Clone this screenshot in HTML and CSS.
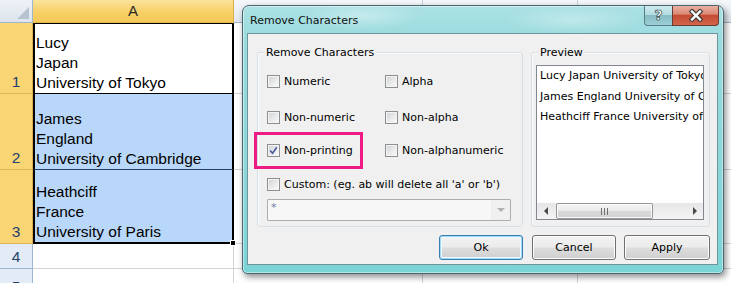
FILE: index.html
```html
<!DOCTYPE html>
<html>
<head>
<meta charset="utf-8">
<title>Remove Characters</title>
<link rel="stylesheet" href="styles.css">
</head>
<body>
<div class="screen">
  <div class="sheet">
    <div class="corner"></div>
    <div class="colhead selcol">A</div>
    <div class="colhead"></div>
    <div class="colhead"></div>
    <div class="colhead"></div>

    <div class="rowhead selrow">1</div>
    <div class="cell a1"><span>Lucy</span><span>Japan</span><span>University of Tokyo</span></div>
    <div class="cell"></div><div class="cell"></div><div class="cell"></div>

    <div class="rowhead selrow">2</div>
    <div class="cell a2"><span>James</span><span>England</span><span>University of Cambridge</span></div>
    <div class="cell"></div><div class="cell"></div><div class="cell"></div>

    <div class="rowhead selrow">3</div>
    <div class="cell a3"><span>Heathciff</span><span>France</span><span>University of Paris</span><i class="fillhandle"></i></div>
    <div class="cell"></div><div class="cell"></div><div class="cell"></div>

    <div class="rowhead">4</div>
    <div class="cell"></div><div class="cell"></div><div class="cell"></div><div class="cell"></div>

    <div class="rowhead">5</div>
    <div class="cell"></div><div class="cell"></div><div class="cell"></div><div class="cell"></div>
  </div>

  <div class="dialog">
    <div class="titlebar">
      <span class="title">Remove Characters</span>
      <div class="capbtns">
        <span class="cbtn help">?</span>
        <span class="cbtn close">
          <svg width="18" height="13" viewBox="0 0 18 13">
            <path d="M5 2.5 L13 10.5 M13 2.5 L5 10.5" stroke="#3a3a3a" stroke-width="4.6" stroke-linecap="square" fill="none"/>
            <path d="M5 2.5 L13 10.5 M13 2.5 L5 10.5" stroke="#ffffff" stroke-width="2.4" stroke-linecap="square" fill="none"/>
          </svg>
        </span>
      </div>
    </div>
    <div class="panel">
      <div class="groups">
        <div class="group main">
          <span class="legend">Remove Characters</span>
          <div class="opts">
            <div class="opt"><span class="cb"></span>Numeric</div>
            <div class="opt"><span class="cb"></span>Alpha</div>
            <div class="opt"><span class="cb"></span>Non-numeric</div>
            <div class="opt"><span class="cb"></span>Non-alpha</div>
            <div class="opt hl"><span class="cb checked"><svg width="9" height="9" viewBox="0 0 9 9"><path d="M1.2 4.6 L3.6 7.2 L7.8 1.2" stroke="#4a5c9a" stroke-width="1.6" fill="none"/></svg></span>Non-printing<i class="hilite"></i></div>
            <div class="opt"><span class="cb"></span>Non-alphanumeric</div>
            <div class="opt wide"><span class="cb"></span>Custom:&nbsp;(eg. ab will delete all 'a' or 'b')</div>
            <div class="combo"><span class="star">*</span><span class="drop"><i class="tri"></i></span></div>
          </div>
        </div>
        <div class="group preview">
          <span class="legend">Preview</span>
          <div class="listbox">
            <div class="lines">
              <div>Lucy Japan University of Tokyo</div>
              <div>James England University of Cambridge</div>
              <div>Heathciff France University of Paris</div>
            </div>
            <div class="hscroll">
              <span class="arr"><i class="tl"></i></span>
              <span class="track"><span class="thumb"><i class="grip"></i></span></span>
              <span class="arr"><i class="tr"></i></span>
            </div>
          </div>
        </div>
      </div>
      <div class="buttons">
        <span class="btn ok">Ok</span>
        <span class="btn cancel">Cancel</span>
        <span class="btn apply">Apply</span>
      </div>
    </div>
  </div>
</div>
</body>
</html>
```

FILE: styles.css
```css
* { box-sizing: border-box; }
html, body { margin: 0; padding: 0; }
body {
  width: 731px;
  height: 283px;
  overflow: hidden;
  background: #ffffff;
  font-family: "Liberation Sans", Arial, sans-serif;
}
.screen {
  position: relative;
  width: 731px;
  height: 283px;
  overflow: hidden;
}

/* ---------- spreadsheet ---------- */
.sheet {
  display: grid;
  grid-template-columns: 33px 201px 189px 155px 160px;
  grid-template-rows: 23px 71px 76px 74px 25px 30px;
}
.corner {
  position: relative;
  background: linear-gradient(#eef2f7, #dde4ec);
  border-right: 1px solid #9eb6ce;
  border-bottom: 1px solid #9eb6ce;
}
.corner::after {
  content: "";
  position: absolute;
  right: 3px;
  bottom: 3px;
  width: 12px;
  height: 12px;
  background: #b7c3d1;
  clip-path: polygon(100% 0, 100% 100%, 0 100%);
}
.colhead {
  background: linear-gradient(#f5f7fa, #e2e8ef);
  border-right: 1px solid #c5d1de;
  border-bottom: 1px solid #9eb6ce;
  font-size: 15px;
  line-height: 22px;
  text-align: center;
  color: #27416b;
}
.colhead.selcol {
  background: linear-gradient(#fbe39b, #f7d066 55%, #f5c95b);
  border-right: 1px solid #d9ad4c;
  border-bottom: 1px solid #e6b54e;
  color: #2b2b2b;
}
.rowhead {
  background: #e3ebf6;
  border-right: 1px solid #9eb6ce;
  border-bottom: 1px solid #9eb6ce;
  font-size: 15.5px;
  line-height: 20px;
  color: #27416b;
  text-align: center;
  display: flex;
  flex-direction: column;
  justify-content: flex-end;
  padding-bottom: 1px;
}
.rowhead.selrow {
  background: #f9d574;
  border-right: 1px solid #dcae4c;
  border-bottom: 1px solid #e0b456;
  color: #22406e;
}
.cell {
  border-right: 1px solid #d4d4d4;
  border-bottom: 1px solid #d4d4d4;
  font-size: 15.5px;
  line-height: 20px;
  color: #000;
  display: flex;
  flex-direction: column;
  justify-content: flex-end;
  padding-left: 1px;
  white-space: nowrap;
}
.cell.a1 {
  background: #fff;
  border: 1px solid #000;
  border-left-width: 2px;
  border-right-width: 2px;
  border-top-width: 1px;
  padding-bottom: 0;
}
.cell.a2 {
  background: #b9d7f9;
  border-left: 2px solid #000;
  border-right: 2px solid #000;
  border-bottom: 1px solid #22406a;
  padding-bottom: 0;
}
.cell.a3 {
  position: relative;
  background: #b9d7f9;
  border-left: 2px solid #000;
  border-right: 2px solid #000;
  border-bottom: 2px solid #000;
  padding-bottom: 0;
}
.fillhandle {
  position: absolute;
  right: -4px;
  bottom: -4px;
  width: 6px;
  height: 6px;
  background: #000;
  border: 1px solid #fff;
}

/* ---------- dialog ---------- */
.dialog {
  position: absolute;
  left: 242px;
  top: 5px;
  width: 482px;
  height: 269px;
  display: flex;
  flex-direction: column;
  padding: 0 5px 8px 4px;
  border: 1px solid #4c6670;
  border-radius: 7px 7px 5px 5px;
  background:
    radial-gradient(ellipse 60px 14px at 120px 10px, rgba(255,255,255,0.35), rgba(255,255,255,0)),
    radial-gradient(ellipse 70px 14px at 330px 14px, rgba(255,255,255,0.3), rgba(255,255,255,0)),
    linear-gradient(#abe1e4 0%, #9adbde 12%, #8ad6d9 60%, #7bd4d6 100%);
  box-shadow: 2px 3px 6px rgba(0,0,0,0.45), inset 0 0 0 1px rgba(255,255,255,0.45);
  font-family: "DejaVu Sans", Verdana, sans-serif;
  font-size: 11px;
  color: #000;
}
.titlebar {
  height: 27px;
  display: flex;
  justify-content: space-between;
  align-items: flex-start;
}
.title {
  padding: 8px 0 0 3px;
  line-height: 13px;
  font-size: 11px;
  color: #111;
}
.capbtns {
  display: flex;
  height: 20px;
  margin-right: -1px;
}
.cbtn {
  display: flex;
  align-items: center;
  justify-content: center;
  height: 20px;
}
.help {
  width: 28px;
  border: 1px solid #5b7c86;
  border-top: none;
  border-right: none;
  border-radius: 0 0 0 4px;
  background: linear-gradient(#cdebee 0%, #b3dce1 45%, #86bcc5 50%, #9dd0d6 100%);
  color: #fff;
  font-family: "DejaVu Sans", sans-serif;
  font-weight: bold;
  font-size: 14px;
  line-height: 19px;
  -webkit-text-stroke: 0.6px #34474d;
  text-shadow: 0 0 1px #2c3e44;
}
.close {
  width: 47px;
  border: 1px solid #6b3a33;
  border-top: none;
  border-radius: 0 0 4px 0;
  background: linear-gradient(#eab0a2 0%, #dc8a75 42%, #c54c33 50%, #d0654a 100%);
}

.panel {
  flex: 1;
  display: flex;
  flex-direction: column;
  background: #f0f0f0;
  border: 1px solid #6e949c;
  padding: 18px 7px 0 9px;
}
.groups {
  display: flex;
  gap: 8px;
  height: 175px;
}
.group {
  position: relative;
  border: 1px solid #d5dfe5;
  border-radius: 3px;
  box-shadow: inset 1px 1px 0 #fbfbfb;
}
.group.main { flex: none; width: 266px; }
.group.preview { flex: 1 1 0; min-width: 0; }
.legend {
  position: absolute;
  top: -8px;
  left: 6px;
  padding: 0 2px;
  background: #f0f0f0;
  line-height: 15px;
  white-space: nowrap;
}
.opts {
  display: grid;
  grid-template-columns: 118px 1fr;
  grid-template-rows: 36px 33px 34px 21px 22px;
  padding: 22px 0 0 9px;
}
.opt {
  position: relative;
  display: flex;
  align-items: center;
  gap: 4px;
  height: 13px;
  line-height: 13px;
  white-space: nowrap;
}
.opt.wide { grid-column: 1 / -1; }
.cb {
  flex: none;
  width: 13px;
  height: 13px;
  border: 1px solid #8e8f8f;
  background: linear-gradient(135deg, #cfd1d5 0%, #e7e8ea 50%, #fbfbfb 100%);
  box-shadow: inset 0 0 0 1px #f4f4f4;
  display: flex;
  align-items: center;
  justify-content: center;
}
.cb svg { display: block; }
.hilite {
  position: absolute;
  left: -13px;
  top: -12px;
  width: 109px;
  height: 37px;
  border: 3px solid #ee1b84;
}
.combo {
  grid-column: 1 / -1;
  width: 244px;
  height: 22px;
  border: 1px solid #acb0b4;
  border-radius: 1px;
  background: #f7f7f7;
  display: flex;
  justify-content: space-between;
}
.star {
  padding: 2px 0 0 3px;
  font-size: 11px;
  line-height: 11px;
  color: #6f82a6;
}
.drop {
  width: 19px;
  background: #f0f0f0;
  display: flex;
  align-items: center;
  justify-content: center;
}
.tri {
  width: 0;
  height: 0;
  border-left: 4px solid transparent;
  border-right: 4px solid transparent;
  border-top: 4px solid #b0b0b0;
}

.listbox {
  margin: 12px 5px 0 4px;
  height: 155px;
  border: 1px solid #828790;
  background: #fff;
  display: flex;
  flex-direction: column;
  overflow: hidden;
}
.lines {
  flex: 1;
  min-width: 0;
  padding: 0 0 0 3px;
  line-height: 20.5px;
  white-space: nowrap;
  overflow: hidden;
}
.hscroll {
  height: 16px;
  flex: none;
  display: flex;
  align-items: stretch;
  background: linear-gradient(#e6e6e6, #f4f4f4);
}
.arr {
  width: 17px;
  display: flex;
  align-items: center;
  justify-content: center;
}
.tl {
  width: 0; height: 0;
  border-top: 4px solid transparent;
  border-bottom: 4px solid transparent;
  border-right: 4px solid #4a4a4a;
}
.tr {
  width: 0; height: 0;
  border-top: 4px solid transparent;
  border-bottom: 4px solid transparent;
  border-left: 4px solid #4a4a4a;
}
.track {
  flex: 1;
  display: flex;
  padding: 0 0 0 2px;
}
.thumb {
  width: 97px;
  border: 1px solid #979797;
  border-radius: 2px;
  background: linear-gradient(#f5f5f5 0%, #e9e9e9 50%, #d9d9d9 51%, #d2d2d2 100%);
  box-shadow: inset 0 0 0 1px #fbfbfb;
  display: flex;
  align-items: center;
  justify-content: center;
}
.grip {
  width: 7px;
  height: 7px;
  background: repeating-linear-gradient(90deg, #6f6f6f 0 1px, transparent 1px 3px);
}

.buttons {
  display: flex;
  justify-content: flex-end;
  margin-top: 8px;
}
.btn {
  height: 25px;
  display: flex;
  align-items: center;
  justify-content: center;
  border: 1px solid #707070;
  border-radius: 3px;
  background: linear-gradient(#f3f3f3 0%, #ebebeb 48%, #dddddd 52%, #cfcfcf 100%);
  box-shadow: inset 0 0 0 1px #fcfcfc;
  color: #000;
}
.btn.ok { width: 84px; border-color: #3c7fb1; box-shadow: inset 0 0 0 1px #9ed9f7, inset 0 0 0 2px #eef8fd; }
.btn.cancel { width: 84px; margin-left: 9px; }
.btn.apply { width: 86px; margin-left: 8px; }
```
